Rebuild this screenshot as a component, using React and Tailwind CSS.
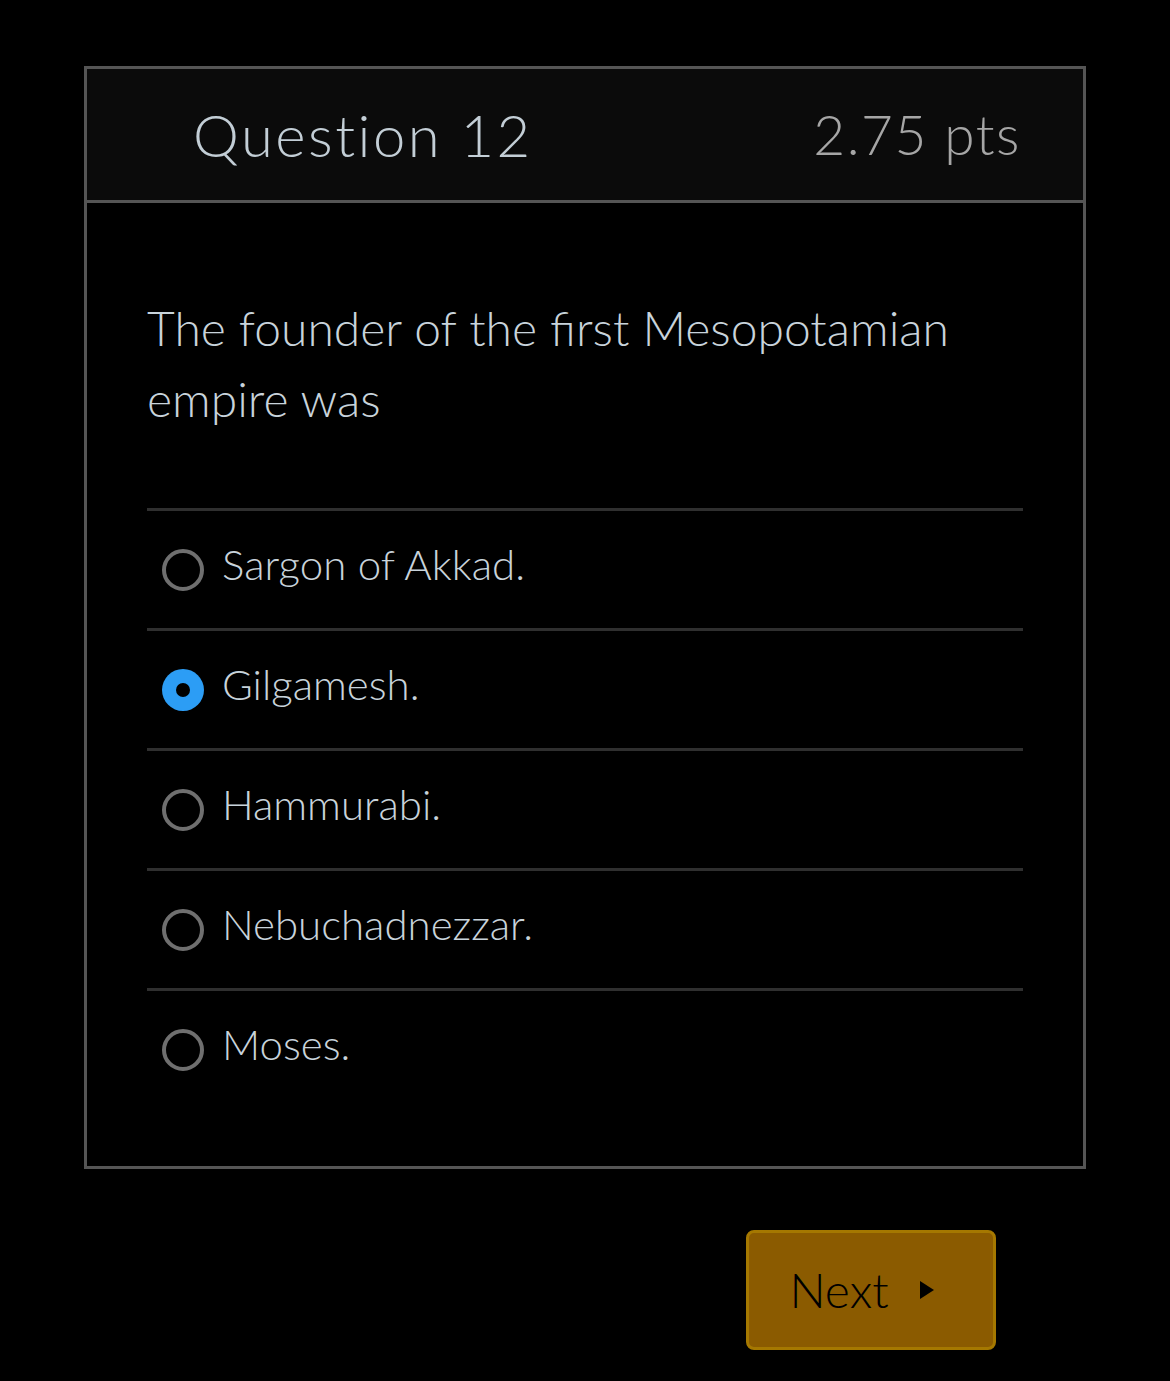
import { useState } from "react"

const answers = ["Sargon of Akkad.", "Gilgamesh.", "Hammurabi.", "Nebuchadnezzar.", "Moses."]

function Radio({ checked }) {
  if (checked) {
    return (
      <span className="flex h-[42px] w-[42px] shrink-0 items-center justify-center rounded-full bg-[#2c9df5]">
        <span className="h-[14px] w-[14px] rounded-full bg-black" />
      </span>
    )
  }
  return <span className="h-[42px] w-[42px] shrink-0 rounded-full border-[4px] border-[#6f6f6f]" />
}

export default function App() {
  const [selected, setSelected] = useState(1)

  return (
    <div className="min-h-[1381px] bg-black pt-[66px] font-['Lato',sans-serif]">
      <div className="ml-[84px] w-[1002px] border-[3px] border-[#555555]">
        {/* Header */}
        <div className="flex h-[134px] items-center justify-between border-b-[3px] border-[#555555] bg-[#0b0b0b] pl-[106px] pr-[62px]">
          <h2 className="text-[58px] font-light tracking-[2.5px] text-[#c3ced6]">Question 12</h2>
          <span className="text-[55px] font-light tracking-[1.5px] text-[#a6a6a6]">2.75 pts</span>
        </div>

        {/* Body */}
        <div className="px-[60px] pb-[58px] pt-[89px]">
          <p className="text-[48px] font-light leading-[71px] text-[#c8d3db]">
            The founder of the first Mesopotamian
            <br />
            empire was
          </p>
          <div className="mt-[74px]">
            {answers.map((a, i) => (
              <label
                key={a}
                onClick={() => setSelected(i)}
                className="flex h-[120px] cursor-pointer items-center gap-[18px] border-t-[3px] border-[#2f2f2f] pl-[15px]"
              >
                <Radio checked={selected === i} />
                <span className="pb-[10px] text-[42px] font-light text-[#c8d3db]">{a}</span>
              </label>
            ))}
          </div>
        </div>
      </div>

      {/* Footer */}
      <div className="ml-[746px] mt-[61px]">
        <button className="flex h-[120px] w-[250px] items-center justify-center gap-[30px] rounded-[8px] border-[3px] border-[#a57800] bg-[#8b5b00] pr-[18px] text-[48px] font-light text-black">
          Next
          <svg width="16" height="20" viewBox="0 0 16 20">
            <path d="M1 1 L15 10 L1 19 Z" fill="black" />
          </svg>
        </button>
      </div>
    </div>
  )
}
